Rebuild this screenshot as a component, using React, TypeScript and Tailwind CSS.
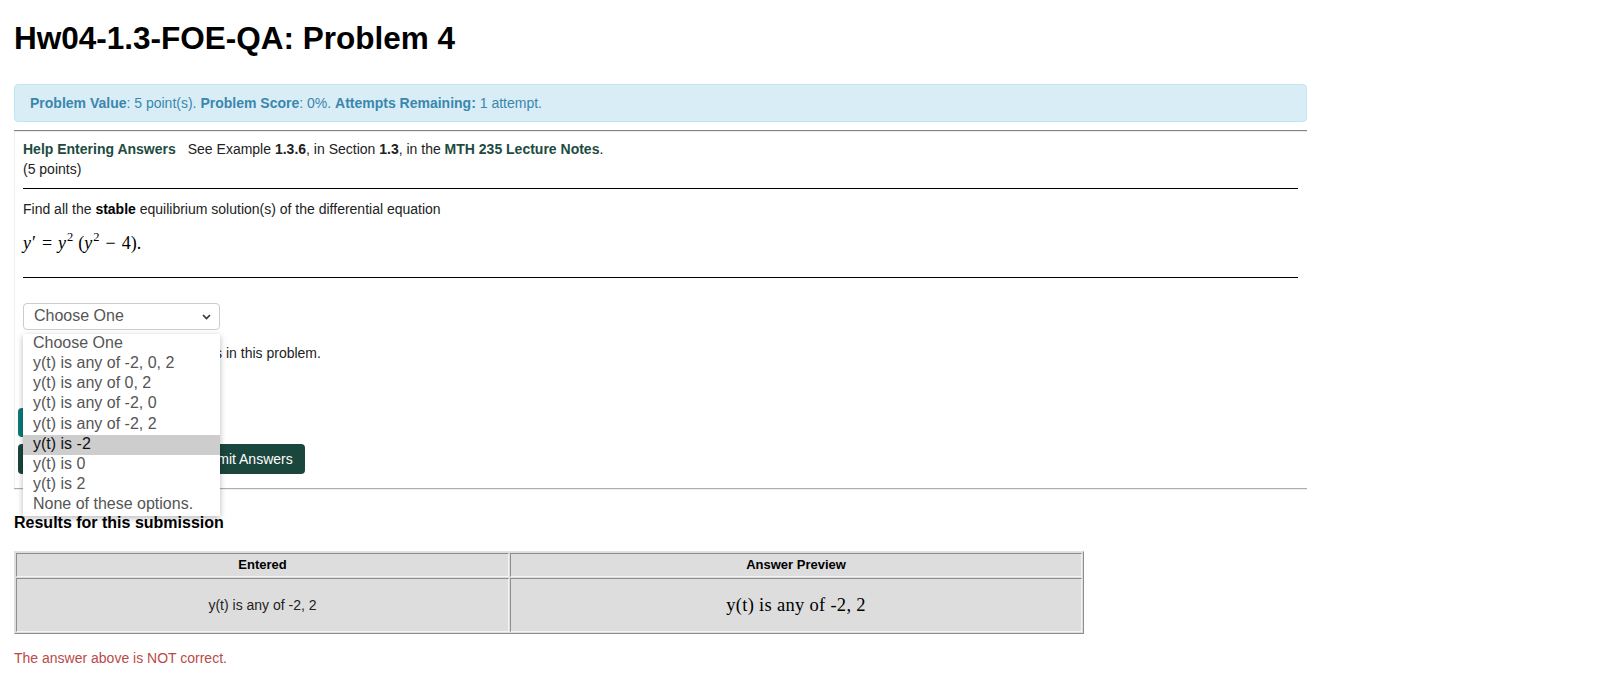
import { useState } from 'react'

const options = [
  'Choose One',
  'y(t) is any of -2, 0, 2',
  'y(t) is any of 0, 2',
  'y(t) is any of -2, 0',
  'y(t) is any of -2, 2',
  'y(t) is -2',
  'y(t) is 0',
  'y(t) is 2',
  'None of these options.',
]

function Sup({ children }: { children: string }) {
  return <span className="relative -top-[8px] ml-[1px] text-[12.5px] leading-none">{children}</span>
}

function AnswerSelect() {
  const [active] = useState(5)
  return (
    <div className="relative w-[197px]">
      <div className="flex h-[27.5px] items-center justify-between rounded-[4px] border border-[#cccccc] bg-white pl-[10px] pr-[8px] text-[16px] leading-[18px] text-[#555]">
        <span>Choose One</span>
        <svg width="9" height="6" viewBox="0 0 9 6" className="mt-[1px]">
          <path d="M1 1l3.5 3.5L8 1" fill="none" stroke="#333" strokeWidth="1.6" />
        </svg>
      </div>
      <div className="absolute left-0 top-[31.3px] z-10 w-[197px] bg-white pb-[1px] text-[16px] leading-[18px] text-[#555] shadow-[0_2px_6px_rgba(0,0,0,0.28)]">
        {options.map((o, i) => (
          <div
            key={o}
            className={
              i === active
                ? 'h-[20.2px] bg-[#cdcdcd] pl-[10px] text-[#111]'
                : 'h-[20.2px] pl-[10px]'
            }
          >
            {o}
          </div>
        ))}
      </div>
    </div>
  )
}

export default function App() {
  return (
    <div className="min-h-[678px] bg-white px-[14px] font-['Liberation_Sans',Arial,sans-serif] text-[14px] leading-[20px] text-[#222]">
      <div className="w-[1293px]">
        <h2 className="mt-[18px] text-[31.5px] font-bold leading-[40px] text-black">
          Hw04-1.3-FOE-QA: Problem 4
        </h2>

        <div className="mt-[26px] rounded-[4px] border border-[#bce8f1] bg-[#d9edf7] px-[15px] py-[8px] text-[#3a87ad]">
          <b>Problem Value</b>: 5 point(s). <b>Problem Score</b>: 0%.{' '}
          <b>Attempts Remaining:</b> 1 attempt.
        </div>

        <div className="mt-[8px] border-b border-t border-b-[#e9e9e9] border-t-[#858585]" />

        <div className="border-l border-[#f0f0f0]">
          <div className="pl-[8px] pr-[9px] pt-[7px]">
            <div>
              <b className="text-[#1d4b41]">Help Entering Answers</b>
              <span className="ml-[12px]">
                See Example <b>1.3.6</b>, in Section <b>1.3</b>, in the{' '}
                <b className="text-[#1d4b41]">MTH 235 Lecture Notes</b>.
              </span>
            </div>
            <div>(5 points)</div>

            <div className="mt-[9px] h-px bg-black" />

            <p className="mt-[9.5px]">
              Find all the <b className="text-black">stable</b> equilibrium solution(s) of the differential
              equation
            </p>
            <div className="mt-[12.5px] font-['Liberation_Serif','Times_New_Roman',serif] text-[18px] leading-[24px] text-black">
              <i>y</i>
              <span className="ml-[1px]">′</span>
              <span className="mx-[6px]">=</span>
              <i>y</i>
              <Sup>2</Sup>
              <span className="ml-[5px]">(</span>
              <i>y</i>
              <Sup>2</Sup>
              <span className="mx-[6px]">−</span>
              <span>4).</span>
            </div>

            <div className="mt-[22px] h-px bg-black" />

            <div className="mt-[24.5px]">
              <AnswerSelect />
            </div>

            <p className="mt-[12.75px] pl-[10px]">There are no hints or solutions in this problem.</p>
          </div>

          <div className="pl-[3px]">
            <button className="mt-[45px] h-[29px] w-[160px] rounded-[4px] bg-[#0b7a77] text-white">
              Preview My Answers
            </button>
            <div className="mt-[7px] flex gap-[4px]">
              <button className="h-[30px] w-[158px] rounded-[4px] bg-[#1a463d] text-white">
                Check Answers
              </button>
              <button className="h-[30px] w-[125px] rounded-[4px] bg-[#1a463d] text-white">
                Submit Answers
              </button>
            </div>
          </div>
          <div className="h-[14px]" />
        </div>

        <div className="border-b border-t border-b-[#efefef] border-t-[#adadad]" />

        <h3 className="mt-[23.7px] text-[16px] font-bold leading-[20px] text-black">
          Results for this submission
        </h3>

        <table className="mt-[17.3px] w-[1070px] border-separate border-spacing-[1px] border border-b-[#8d8d8d] border-l-[#e2e2e2] border-r-[#8d8d8d] border-t-[#e2e2e2] bg-[#dddddd]">
          <thead>
            <tr>
              <th className="w-[493px] border border-b-[#f3f3f3] border-l-[#8d8d8d] border-r-[#f3f3f3] border-t-[#8d8d8d] py-[1px] text-[13px] font-bold leading-[20px] text-black">
                Entered
              </th>
              <th className="border border-b-[#f3f3f3] border-l-[#8d8d8d] border-r-[#f3f3f3] border-t-[#8d8d8d] py-[1px] text-[13px] font-bold leading-[20px] text-black">
                Answer Preview
              </th>
            </tr>
          </thead>
          <tbody>
            <tr>
              <td className="border border-b-[#f3f3f3] border-l-[#8d8d8d] border-r-[#f3f3f3] border-t-[#8d8d8d] py-[16px] text-center leading-[20px]">
                y(t) is any of -2, 2
              </td>
              <td className="border border-b-[#f3f3f3] border-l-[#8d8d8d] border-r-[#f3f3f3] border-t-[#8d8d8d] py-[16px] text-center font-['Liberation_Serif','Times_New_Roman',serif] text-[18.5px] leading-[20px] tracking-[0.3px] text-black">
                y(t) is any of -2, 2
              </td>
            </tr>
          </tbody>
        </table>

        <p className="mt-[14px] text-[#b94a48]">The answer above is NOT correct.</p>
      </div>
    </div>
  )
}
